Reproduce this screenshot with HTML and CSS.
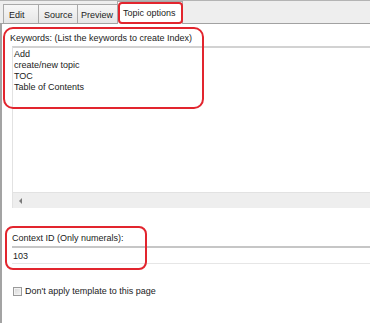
FILE: index.html
```html
<!DOCTYPE html>
<html>
<head>
<meta charset="utf-8">
<link rel="stylesheet" href="styles.css">
</head>
<body>
<div class="window">
  <div class="tabstrip">
    <div class="tab tab-edit">Edit</div>
    <div class="tab tab-source">Source</div>
    <div class="tab tab-preview">Preview</div>
    <div class="tab tab-active">Topic options</div>
  </div>
  <div class="panel">
    <div class="kw-label">Keywords: (List the keywords to create Index)</div>
    <div class="kw-box">
      <div class="kw-text">
        <div class="line">Add</div>
        <div class="line">create/new topic</div>
        <div class="line">TOC</div>
        <div class="line">Table of Contents</div>
      </div>
      <div class="hscroll"><span class="arrow-left"></span></div>
    </div>
    <div class="ctx-label">Context ID (Only numerals):</div>
    <div class="ctx-input">103</div>
    <div class="check-row">
      <span class="checkbox"></span>
      <span class="check-label">Don't apply template to this page</span>
    </div>
  </div>
  <div class="mark mark-tab"></div>
  <div class="mark mark-kw"></div>
  <div class="mark mark-ctx"></div>
</div>
</body>
</html>
```

FILE: styles.css
```css
html, body {
  margin: 0;
  padding: 0;
  background: #ffffff;
}

.window {
  position: relative;
  width: 370px;
  height: 323px;
  overflow: hidden;
  background: #ffffff;
  font-family: "Liberation Sans", Arial, sans-serif;
  font-size: 9px;
  line-height: 11px;
  color: #222222;
  display: flex;
  flex-direction: column;
}

.tabstrip {
  box-sizing: border-box;
  height: 24px;
  flex: none;
  background: #eeeeee;
  border-top: 1px solid #b4b4b4;
  border-bottom: 1px solid #a2a2a2;
  display: flex;
  align-items: flex-end;
  padding-left: 3px;
}

.tab {
  box-sizing: border-box;
  height: 19px;
  border: 1px solid #a9a9a9;
  border-bottom: none;
  background: linear-gradient(#f7f7f7, #e6e6e6);
  padding-top: 5px;
  padding-left: 5px;
  margin-left: -1px;
}

.tab-edit { width: 36px; margin-left: 0; }
.tab-source { width: 40px; }
.tab-preview { width: 41px; padding-left: 3px; }

.tab-active {
  width: 66px;
  height: 23px;
  margin-bottom: -1px;
  background: #ffffff;
  padding-top: 6px;
  padding-left: 5px;
}

.panel {
  flex: 1;
  border-left: 2px solid #a3a3a3;
  display: flex;
  flex-direction: column;
}

.kw-label {
  box-sizing: border-box;
  height: 22px;
  padding-top: 9px;
  padding-left: 8px;
}

.kw-box {
  margin-left: 10px;
  border-top: 2px solid #d2d2d2;
  border-left: 1px solid #e2e2e2;
  display: flex;
  flex-direction: column;
}

.kw-text {
  box-sizing: border-box;
  height: 144px;
  padding-top: 1px;
  padding-left: 1px;
}

.hscroll {
  box-sizing: border-box;
  height: 16px;
  background: #eeeeee;
  border-top: 1px solid #e2e2e2;
  display: flex;
  align-items: center;
  padding-left: 6px;
}

.arrow-left {
  width: 0;
  height: 0;
  border-top: 3px solid transparent;
  border-bottom: 3px solid transparent;
  border-right: 3px solid #7a7a7a;
}

.ctx-label {
  margin-top: 25px;
  margin-left: 10px;
}

.ctx-input {
  margin-top: 2px;
  margin-left: 10px;
  box-sizing: border-box;
  height: 18px;
  border-top: 2px solid #c6c6c6;
  border-bottom: 1px solid #e6e6e6;
  padding-top: 3px;
  padding-left: 1px;
}

.check-row {
  margin-top: 22px;
  margin-left: 11px;
  display: flex;
  align-items: center;
  gap: 3px;
}

.checkbox {
  box-sizing: border-box;
  width: 9px;
  height: 9px;
  border: 1px solid #9a9a9a;
  background: linear-gradient(135deg, #d6d6d6, #f6f6f6);
  box-shadow: inset 0 0 0 1px #f2f2f2;
}

.mark {
  position: absolute;
  box-sizing: border-box;
  border: 2px solid #e2252e;
}

.mark-tab {
  left: 118px;
  top: 2px;
  width: 65px;
  height: 22px;
  border-radius: 4px;
}

.mark-kw {
  left: 3px;
  top: 27px;
  width: 201px;
  height: 82px;
  border-radius: 10px;
}

.mark-ctx {
  left: 5px;
  top: 226px;
  width: 142px;
  height: 44px;
  border-radius: 8px;
}
```
